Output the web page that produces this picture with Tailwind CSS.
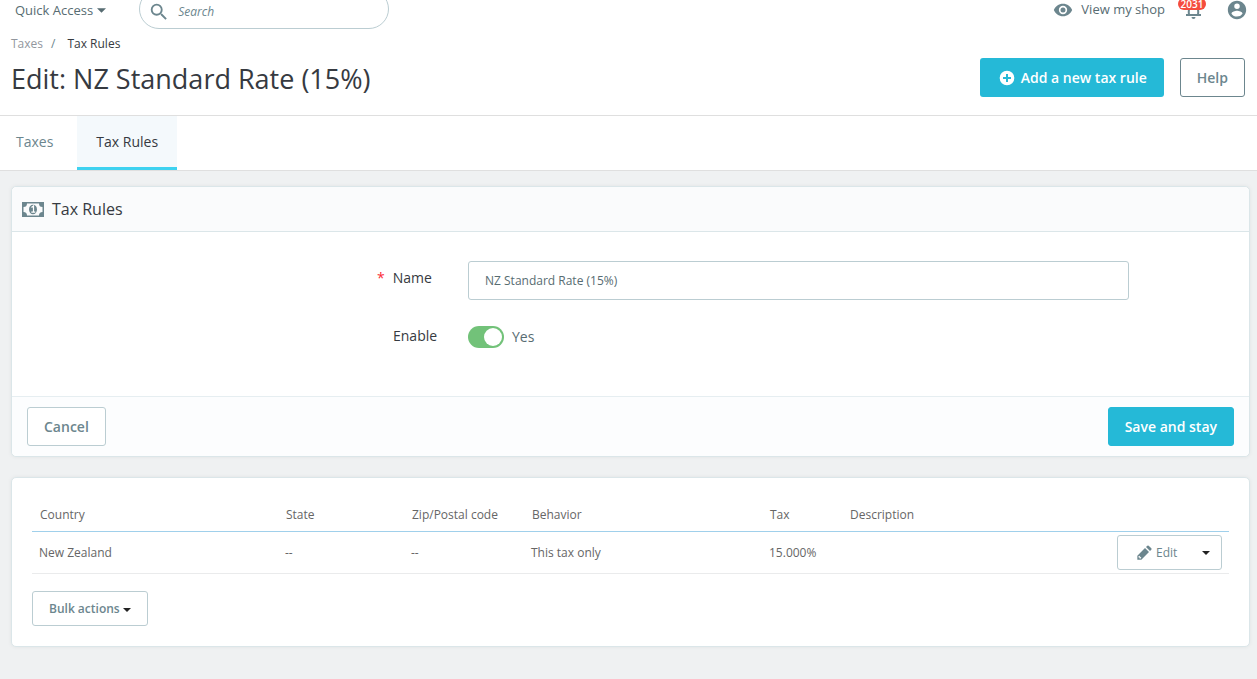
<!DOCTYPE html>
<html lang="en">
<head>
<meta charset="utf-8">
<meta name="viewport" content="width=device-width, initial-scale=1">
<title>Tax Rules</title>
<script src="https://cdn.jsdelivr.net/npm/@tailwindcss/browser@4"></script>
</head>
<body class="min-h-screen bg-[#eff1f2] font-['Open_Sans',sans-serif] text-sm text-[#363a41]">
<header class="overflow-hidden border-b border-[#dfdfdf] bg-white">
  <div class="flex h-[29px] items-center pr-[9px] pl-[15px]">
    <button type="button" class="-mt-2 flex items-center gap-1 text-[13px] text-[#576c72]">Quick Access
      <svg class="h-[5px] w-[9px]" viewBox="0 0 10 5" fill="currentColor" aria-hidden="true"><path d="M0 0h10L5 5z"/></svg>
    </button>
    <form class="-mt-3 ml-[33px] flex h-10 w-[250px] items-center rounded-full border border-[#bbcdd2] pl-2" role="search">
      <svg class="mt-1.5 size-[22px] shrink-0 text-[#6c868e]" viewBox="0 0 24 24" fill="currentColor" aria-hidden="true"><path d="M15.500 14h-.79l-.28-.27A6.471 6.471 0 0 0 16 9.500 6.500 6.500 0 1 0 9.500 16c1.610 0 3.090-.59 4.230-1.570l.27.28v.79l5 4.990L20.490 19l-4.990-5zm-6 0C7.010 14 5 11.990 5 9.500S7.010 5 9.500 5 14 7.010 14 9.500 11.990 14 9.500 14z"/></svg>
      <input type="search" aria-label="Search" placeholder="Search" class="mt-1.5 ml-2 w-40 bg-transparent text-xs italic outline-none placeholder:text-[#6c868e]">
    </form>
    <div class="-mt-2.5 ml-auto flex items-center">
      <a href="#" class="flex items-center gap-2 text-[13px] text-[#576c72]">
        <svg class="size-5 text-[#6c868e]" viewBox="0 0 24 24" fill="currentColor" aria-hidden="true"><path d="M12 4.500C7 4.500 2.730 7.610 1 12c1.730 4.390 6 7.500 11 7.500s9.270-3.110 11-7.500c-1.730-4.390-6-7.500-11-7.500zM12 17a5 5 0 1 1 0-10 5 5 0 0 1 0 10zm0-8a3 3 0 1 0 0 6 3 3 0 0 0 0-6z"/></svg>
        View my shop
      </a>
      <button type="button" aria-label="Notifications" class="relative ml-[18px] size-[22px] text-[#6c868e]">
        <svg class="size-[22px]" viewBox="0 0 22 22" fill="none" stroke="currentColor" stroke-width="2" aria-hidden="true"><path d="M3 16h15M6 16q-.5-3 0-6a4.500 4.500 0 0 1 9 0q.5 3 0 6"/><path d="M8.500 18h4a2 2 0 0 1-4 0z" fill="currentColor" stroke="none"/></svg>
        <span class="absolute -top-px -left-[5px] flex h-3 w-7 items-center justify-center rounded-full bg-[#f54c3e] text-[10px] leading-none font-semibold text-white">2031</span>
      </button>
      <button type="button" aria-label="Account" class="ml-[21px] text-[#6c868e]">
        <svg class="size-[22px]" viewBox="0 0 24 24" fill="currentColor" aria-hidden="true"><path d="M12 2C6.480 2 2 6.480 2 12s4.480 10 10 10 10-4.480 10-10S17.520 2 12 2zm0 3a3 3 0 1 1 0 6 3 3 0 0 1 0-6zm0 14.200a7.200 7.200 0 0 1-6-3.220c.03-1.990 4-3.080 6-3.080 1.990 0 5.970 1.090 6 3.080a7.200 7.200 0 0 1-6 3.220z"/></svg>
      </button>
    </div>
  </div>
  <div class="flex items-end justify-between pr-3 pb-[18px] pl-[11px]">
    <div class="pt-1.5">
      <nav aria-label="Breadcrumb" class="flex h-[18px] items-center gap-2 text-xs">
        <a href="#" class="text-[#92979e]">Taxes</a><span class="text-[#6c868e]">/</span><a href="#" class="ml-1">Tax Rules</a>
      </nav>
      <h1 class="mt-2 text-[27px] leading-9">Edit: NZ Standard Rate (15%)</h1>
    </div>
    <div class="flex gap-4">
      <button type="button" class="flex h-[39px] items-center gap-1.5 rounded-[3px] bg-[#25b9d7] pr-[17px] pl-[19px] font-semibold text-white">
        <svg class="size-4" viewBox="0 0 24 24" fill="currentColor" aria-hidden="true"><path fill-rule="evenodd" d="M12 1a11 11 0 1 0 0 22 11 11 0 0 0 0-22zm6 12.500h-4.500V18h-3v-4.500H6v-3h4.500V6h3v4.500H18z"/></svg>
        Add a new tax rule
      </button>
      <button type="button" class="h-[39px] rounded-[3px] border border-[#6c868e] px-4 font-semibold text-[#6c868e]">Help</button>
    </div>
  </div>
</header>
<nav aria-label="Sections" class="flex h-[55px] border-b border-[#dfdfdf] bg-white">
  <a href="#" class="flex items-center px-4 pb-0.5 text-[#6c868e]">Taxes</a>
  <a href="#" aria-current="page" class="ml-2 flex items-center border-b-3 border-[#3ed2f0] bg-[#f4f9fc] px-[19px]">Tax Rules</a>
</nav>
<main class="space-y-5 pt-[15px] pr-[7px] pb-8 pl-[11px]">
  <form class="rounded-[5px] border border-[#dbe6e9] bg-white shadow-[0_0_4px_rgba(0,0,0,0.06)]">
    <h2 class="flex h-[45px] items-center gap-2 rounded-t-[5px] border-b border-[#dbe6e9] bg-[#fafbfc] px-2.5 text-base font-medium">
      <svg class="h-[15px] w-[22px] text-[#6c868e]" viewBox="0 0 22 15" fill="currentColor" aria-hidden="true"><path fill-rule="evenodd" d="M0 0h22v15H0zM5 1.500A3.500 3.500 0 0 1 1.500 5v5A3.500 3.500 0 0 1 5 13.500h12a3.500 3.500 0 0 1 3.500-3.500V5A3.500 3.500 0 0 1 17 1.500z"/><ellipse cx="11" cy="7.500" rx="4" ry="4.800"/><path d="M9.500 5.500 11.500 4v6M9.300 10.200h4" fill="none" stroke="#fff" stroke-width="1.200"/></svg>
      Tax Rules
    </h2>
    <div class="grid grid-cols-[456px_minmax(0,1fr)] pt-[29px] pr-[120px] pb-12">
      <label for="name" class="flex gap-2 pt-[7px] pl-[365px]"><span class="text-red-500">*</span>Name</label>
      <input id="name" type="text" value="NZ Standard Rate (15%)" class="h-[39px] w-full rounded-[3px] border border-[#bbcdd2] px-4 text-xs text-[#576c72]">
      <label for="enable" class="mt-[26px] pl-[381px]">Enable</label>
      <div class="mt-[26px] flex items-center gap-2">
        <input id="enable" type="checkbox" role="switch" checked class="h-[22px] w-9 appearance-none rounded-full bg-[#bbcdd2] p-0.5 before:block before:size-[18px] before:rounded-full before:bg-white checked:bg-[#72c279] checked:before:ml-[14px]">
        <span class="text-[#576c72]">Yes</span>
      </div>
    </div>
    <div class="flex justify-between rounded-b-[5px] border-t border-[#e6eef1] bg-[#fcfdfe] px-[15px] py-2.5">
      <button type="button" class="h-[39px] rounded-[3px] border border-[#bbcdd2] bg-white px-4 font-semibold text-[#6c868e]">Cancel</button>
      <button type="submit" class="h-[39px] rounded-[3px] border border-[#25b9d7] bg-[#25b9d7] px-4 font-semibold text-white">Save and stay</button>
    </div>
  </form>
  <section aria-label="Rules" class="rounded-[5px] border border-[#dbe6e9] bg-white px-5 py-5 shadow-[0_0_4px_rgba(0,0,0,0.06)]">
    <table class="w-full table-fixed border-collapse text-left text-xs text-[#666]">
      <thead>
        <tr class="h-[33px] border-b border-[#a0d0eb]">
          <th class="w-[246px] pt-0.5 pl-2 font-normal">Country</th>
          <th class="w-[126px] pt-0.5 pl-2 font-normal">State</th>
          <th class="w-[120px] pt-0.5 pl-2 font-normal">Zip/Postal code</th>
          <th class="w-[238px] pt-0.5 pl-2 font-normal">Behavior</th>
          <th class="w-20 pt-0.5 pl-2 font-normal">Tax</th>
          <th class="pt-0.5 pl-2 font-normal">Description</th>
          <th class="w-[120px]" aria-label="Actions"></th>
        </tr>
      </thead>
      <tbody>
        <tr class="h-[42px] border-b border-[#eaebec]">
          <td class="pt-px pl-[7px]">New Zealand</td>
          <td class="pt-px pl-[7px]">--</td>
          <td class="pt-px pl-[7px]">--</td>
          <td class="pt-px pl-[7px]">This tax only</td>
          <td class="pt-px pl-[7px]">15.000%</td>
          <td></td>
          <td class="pr-[7px]">
            <div class="ml-auto flex h-[35px] w-[105px] rounded-[3px] border border-[#bbcdd2]">
              <a href="#" class="flex flex-1 items-center gap-1 pt-px pl-[18px] font-medium text-[#6c868e]">
                <svg class="size-4" viewBox="0 0 24 24" fill="currentColor" aria-hidden="true"><path fill-rule="evenodd" d="M2 22v-6L13.500 4.500l6 6L8 22zM3.800 17v1.800h1.500v1.500H7l1-1L4.800 16zM15 3l2-2q1-.8 2 0l4 4q.8 1 0 2l-2 2z"/></svg>
                Edit
              </a>
              <button type="button" aria-label="More actions" class="flex w-[30px] items-center justify-center pt-px text-[#222]">
                <svg class="h-1 w-2" viewBox="0 0 8 4" fill="currentColor" aria-hidden="true"><path d="M0 0h8L4 4z"/></svg>
              </button>
            </div>
          </td>
        </tr>
      </tbody>
    </table>
    <button type="button" class="mt-[17px] flex h-[35px] items-center gap-[3px] rounded-[3px] border border-[#bbcdd2] px-4 pt-px text-xs font-semibold text-[#6c868e]">Bulk actions
      <svg class="mt-0.5 h-1 w-2 text-[#222]" viewBox="0 0 8 4" fill="currentColor" aria-hidden="true"><path d="M0 0h8L4 4z"/></svg>
    </button>
  </section>
</main>
</body>
</html>
